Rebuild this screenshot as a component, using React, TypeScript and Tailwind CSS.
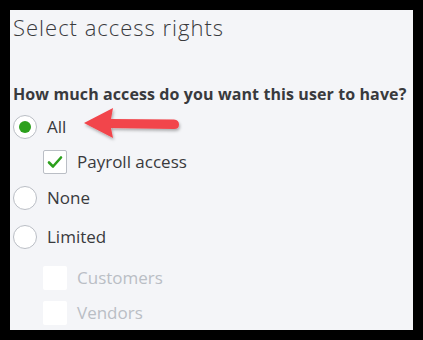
import React from "react";

function Radio({ checked }: { checked?: boolean }) {
  return (
    <div className="w-[24px] h-[24px] rounded-full bg-white border border-[#babec5] flex items-center justify-center shrink-0">
      {checked && <div className="w-[12px] h-[12px] rounded-full bg-[#2ca01c]" />}
    </div>
  );
}

function Box({ checked }: { checked?: boolean }) {
  return (
    <div
      className={
        "w-[24px] h-[24px] rounded-[2px] bg-white flex items-center justify-center shrink-0 " +
        (checked ? "border border-[#babec5]" : "")
      }
    >
      {checked && (
        <svg width="16" height="14" viewBox="0 0 16 14">
          <path d="M2 7.5 L6 11.5 L14 2.5" fill="none" stroke="#2ca01c" strokeWidth="2.6" strokeLinecap="round" strokeLinejoin="round" />
        </svg>
      )}
    </div>
  );
}

export default function App() {
  return (
    <div className="w-[423px] h-[340px] bg-black pt-[10px] pl-[10px]" style={{ fontFamily: "'Open Sans', sans-serif" }}>
      <div className="relative w-[403px] h-[320px] bg-[#f4f5f8] overflow-hidden pl-[3px]">
        <div className="pt-[3px] text-[22px] leading-[28px] text-[#393a3d] font-light tracking-[1px]">Select access rights</div>
        <div className="mt-[43px] text-[16px] leading-[20px] font-bold text-[#393a3d] tracking-[0.1px]">How much access do you want this user to have?</div>
        <div className="mt-[11px] flex items-center gap-[10px] h-[24px]">
          <Radio checked />
          <span className="text-[17px] text-[#393a3d]">All</span>
        </div>
        <div className="mt-[11px] ml-[30px] flex items-center gap-[10px] h-[24px]">
          <Box checked />
          <span className="text-[17px] text-[#393a3d]">Payroll access</span>
        </div>
        <div className="mt-[12px] flex items-center gap-[10px] h-[24px]">
          <Radio />
          <span className="text-[17px] text-[#393a3d]">None</span>
        </div>
        <div className="mt-[15px] flex items-center gap-[10px] h-[24px]">
          <Radio />
          <span className="text-[17px] text-[#393a3d]">Limited</span>
        </div>
        <div className="mt-[17px] ml-[30px] flex items-center gap-[10px] h-[24px]">
          <Box />
          <span className="text-[17px] text-[#babec5]">Customers</span>
        </div>
        <div className="mt-[11px] ml-[30px] flex items-center gap-[10px] h-[24px]">
          <Box />
          <span className="text-[17px] text-[#babec5]">Vendors</span>
        </div>
        <svg className="absolute left-0 top-0" width="403" height="320" viewBox="0 0 403 320">
          <defs>
            <filter id="sh" x="-20%" y="-50%" width="140%" height="200%">
              <feDropShadow dx="1" dy="2" stdDeviation="1.5" floodColor="#000" floodOpacity="0.3" />
            </filter>
          </defs>
          <g filter="url(#sh)" transform="translate(-10,-10)">
            <path d="M84 123 L113 108 L111 119 L174 119.5 Q179 120 179 124.5 Q179 129 174 129 L111 128 L113 138 Z" fill="#f2454b" strokeLinejoin="round" />
          </g>
        </svg>
      </div>
    </div>
  );
}
